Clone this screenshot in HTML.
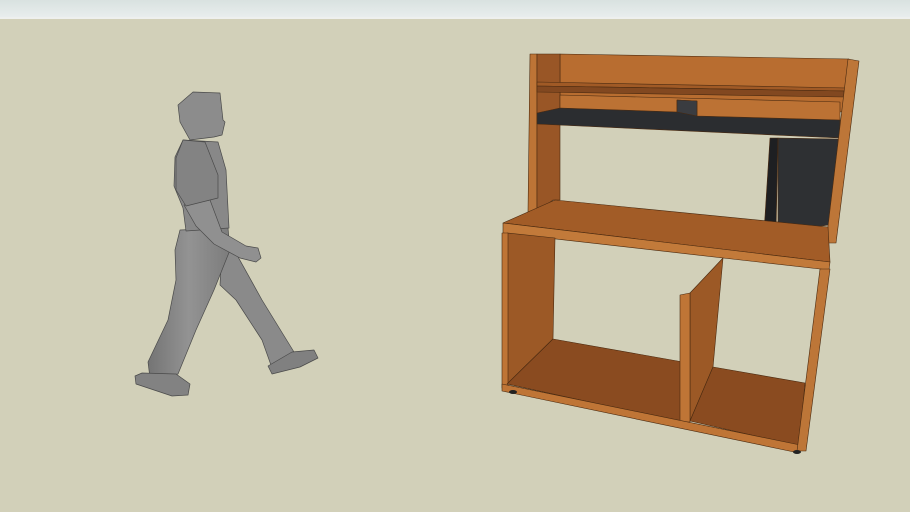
<!DOCTYPE html>
<html><head><meta charset="utf-8"><style>
html,body{margin:0;padding:0;width:910px;height:512px;overflow:hidden;background:#d2d0b9}
svg{display:block}
</style></head><body>
<svg width="910" height="512" viewBox="0 0 910 512" xmlns="http://www.w3.org/2000/svg">
<defs>
<linearGradient id="top" x1="0" y1="0" x2="0" y2="1"><stop offset="0" stop-color="#d9e2e0"/><stop offset="1" stop-color="#e8eded"/></linearGradient>
<linearGradient id="man" x1="0" y1="0" x2="1" y2="0"><stop offset="0" stop-color="#747474"/><stop offset="0.5" stop-color="#939393"/><stop offset="1" stop-color="#7c7c7c"/></linearGradient>
</defs>
<rect x="0" y="0" width="910" height="17" fill="url(#top)"/>
<rect x="0" y="17" width="910" height="2" fill="#eef0ee"/>

<g stroke="#4a4a4a" stroke-width="0.7" stroke-linejoin="round">
<polygon fill="#8a8a8a" points="222,250 232,246 262,300 294,352 296,360 272,368 262,340 236,300 220,285"/>
<polygon fill="#808080" points="292,352 314,350 318,358 300,367 272,374 268,366"/>
<polygon fill="url(#man)" points="180,230 228,228 230,250 214,290 196,330 178,374 150,378 148,362 168,320 176,280 175,250"/>
<polygon fill="#828282" points="142,373 176,374 190,384 188,395 172,396 136,384 135,376"/>
<polygon fill="#888888" points="183,140 218,142 226,170 229,228 186,231 183,208 174,186 175,157"/>
<polygon fill="#909090" points="184,205 210,200 222,232 246,246 258,248 261,258 256,262 240,258 214,244 196,226"/>
<polygon fill="#838383" points="176,158 183,140 205,142 218,175 218,198 186,206 176,190"/>
<polygon fill="#8c8c8c" points="178,105 193,92 220,93 223,120 225,122 222,135 214,137 190,140 180,122"/>
</g>

<g stroke="#4a2a10" stroke-width="0.6" stroke-linejoin="round">
<polygon fill="#b86d30" points="560,54 849,59 846,112 560,108"/>
<polygon fill="#bd7436" points="530,54 537,54 537,212 528,212"/>
<polygon fill="#995626" points="537,54 560,54 560,200 553,200 537,212"/>
<polygon fill="#a05a26" points="537,82 848,88 844,91 537,86"/>
<polygon fill="#824820" points="537,86 844,91 844,97 537,92"/>
<polygon fill="#bc7234" points="560,95 840,102 840,125 560,114"/>
<polygon fill="#2b2d30" points="537,113 560,108 677,112 677,100 697,101 697,116 840,120 840,138 537,124"/>
<polygon fill="#3a3c40" points="677,100 697,101 697,116 677,112"/>
<polygon fill="#2e3033" points="778,138 838,139 836,224 778,232"/>
<polygon fill="#1e1f22" points="770,138 778,138 776,232 764,232"/>
<polygon fill="#bd7638" points="848,59 859,61 836,243 826,243"/>
<polygon fill="#a25c27" points="503,223 555,200 828,227 830,262"/>
<polygon fill="#c27a3a" points="503,223 830,262 829,270 503,233"/>
<polygon fill="#9c5926" points="507,233 555,238 553,339 507,384"/>
<polygon fill="#bf7536" points="502,233 508,233 508,388 502,388"/>
<polygon fill="#8a4b20" points="507,384 553,339 683,362 681,422"/>
<polygon fill="#9c5926" points="690,293 723,258 713,367 690,421"/>
<polygon fill="#bf7536" points="680,295 690,293 690,422 680,422"/>
<polygon fill="#8a4b20" points="690,421 713,367 805,383 799,446"/>
<polygon fill="#bf7536" points="502,384 800,445 799,453 502,391"/>
<polygon fill="#bd7638" points="820,269 830,269 806,451 797,451"/>
</g>
<ellipse cx="513" cy="392" rx="4" ry="2" fill="#222"/>
<ellipse cx="797" cy="452" rx="4" ry="2" fill="#222"/>
</svg>
</body></html>
